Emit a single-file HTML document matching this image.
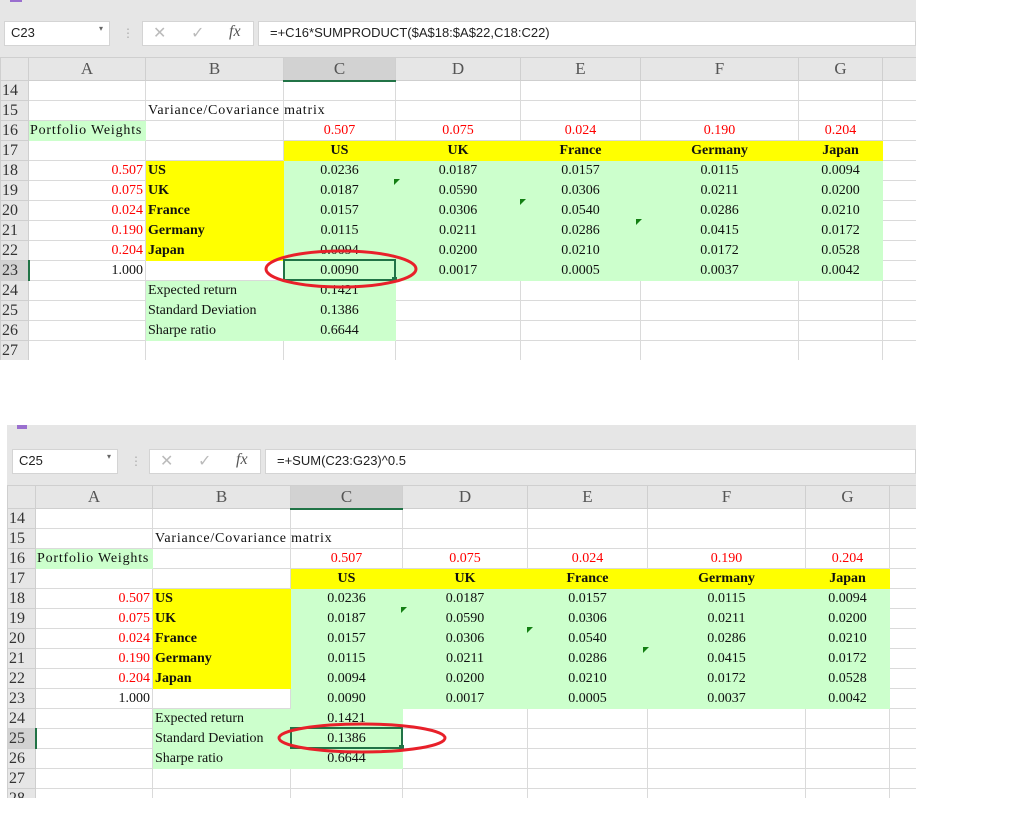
<!DOCTYPE html>
<html><head><meta charset="utf-8">
<style>
*{margin:0;padding:0;box-sizing:border-box}
body{width:1024px;height:828px;background:#fff;position:relative;overflow:hidden;font-family:"Liberation Serif",serif}
.panel{position:absolute;background:#e6e6e6;overflow:hidden}
.nb{position:absolute;background:#fff;border:1px solid #d4d4d4;font-family:"Liberation Sans",sans-serif;font-size:13px;color:#222;padding:3px 6px;height:25px}
.btns{position:absolute;background:#fff;border:1px solid #d4d4d4;height:25px;color:#bbb;font-size:16px}
table{position:absolute;border-collapse:collapse;table-layout:fixed;font-size:14px;color:#111}
td{height:20px;border:1px solid #dadada;background:#fff;white-space:nowrap;overflow:visible;padding:0 2px;line-height:18px}
tr.h td{height:23px;background:#e6e6e6;border-color:#cfcfcf;text-align:center;font-size:17px;color:#555}
tr.h td.sel{background:#d2d2d2;border-bottom:2px solid #217346}
td.rh{background:#e6e6e6;border-color:#cfcfcf;font-size:16px;color:#333;padding-left:1px;text-align:left}
td.rhs{background:#d2d2d2;border-right:2px solid #217346}
.g{background:#ccffcc;border-color:#ccffcc}
.y{background:#ffff00;border-color:#ffff00;font-weight:bold}
.r{color:#ff0000}
.c{text-align:center}
.rt{text-align:right}
.w{letter-spacing:0.8px}
.tri{position:absolute;width:0;height:0;border-top:6px solid #137f13;border-right:6px solid transparent}
</style></head><body>

<!-- TOP PANEL -->
<div class="panel" style="left:0;top:0;width:916px;height:360px">
  <div style="position:absolute;left:10px;top:0;width:12px;height:2px;background:#9a6fcf"></div>
  <div class="nb" style="left:4px;top:21px;width:106px">C23<span style="position:absolute;right:6px;top:2px;font-size:8px;color:#666">▾</span></div>
  <div style="position:absolute;left:122px;top:26px;color:#aaa;font-size:12px">⋮</div>
  <div class="btns" style="left:142px;top:21px;width:112px"><span style="position:absolute;left:10px;top:1px">✕</span><span style="position:absolute;left:48px;top:1px">✓</span><span style="position:absolute;left:86px;top:1px;color:#555;font-style:italic;font-family:'Liberation Serif',serif">fx</span></div>
  <div class="nb" style="left:258px;top:21px;width:658px;padding-left:11px">=+C16*SUMPRODUCT($A$18:$A$22,C18:C22)</div>
  <table style="left:0;top:57px;width:916px">
    <colgroup><col style="width:28px"><col style="width:117px"><col style="width:138px"><col style="width:112px"><col style="width:125px"><col style="width:120px"><col style="width:158px"><col style="width:84px"><col style="width:34px"></colgroup>
    <tr class="h"><td></td><td>A</td><td>B</td><td class="sel">C</td><td>D</td><td>E</td><td>F</td><td>G</td><td></td></tr>
    <tr><td class="rh">14</td><td></td><td></td><td></td><td></td><td></td><td></td><td></td><td></td></tr>
    <tr><td class="rh">15</td><td></td><td class="w">Variance/Covariance matrix</td><td></td><td></td><td></td><td></td><td></td><td></td></tr>
    <tr><td class="rh">16</td><td class="g w" style="padding:0 1px">Portfolio Weights</td><td></td><td class="c r">0.507</td><td class="c r">0.075</td><td class="c r">0.024</td><td class="c r">0.190</td><td class="c r">0.204</td><td></td></tr>
    <tr><td class="rh">17</td><td></td><td></td><td class="y c">US</td><td class="y c">UK</td><td class="y c">France</td><td class="y c">Germany</td><td class="y c">Japan</td><td></td></tr>
    <tr><td class="rh">18</td><td class="rt r">0.507</td><td class="y">US</td><td class="g c">0.0236</td><td class="g c">0.0187</td><td class="g c">0.0157</td><td class="g c">0.0115</td><td class="g c">0.0094</td><td></td></tr>
    <tr><td class="rh">19</td><td class="rt r">0.075</td><td class="y">UK</td><td class="g c">0.0187</td><td class="g c">0.0590</td><td class="g c">0.0306</td><td class="g c">0.0211</td><td class="g c">0.0200</td><td></td></tr>
    <tr><td class="rh">20</td><td class="rt r">0.024</td><td class="y">France</td><td class="g c">0.0157</td><td class="g c">0.0306</td><td class="g c">0.0540</td><td class="g c">0.0286</td><td class="g c">0.0210</td><td></td></tr>
    <tr><td class="rh">21</td><td class="rt r">0.190</td><td class="y">Germany</td><td class="g c">0.0115</td><td class="g c">0.0211</td><td class="g c">0.0286</td><td class="g c">0.0415</td><td class="g c">0.0172</td><td></td></tr>
    <tr><td class="rh">22</td><td class="rt r">0.204</td><td class="y">Japan</td><td class="g c">0.0094</td><td class="g c">0.0200</td><td class="g c">0.0210</td><td class="g c">0.0172</td><td class="g c">0.0528</td><td></td></tr>
    <tr><td class="rh rhs">23</td><td class="rt">1.000</td><td></td><td class="g c">0.0090</td><td class="g c">0.0017</td><td class="g c">0.0005</td><td class="g c">0.0037</td><td class="g c">0.0042</td><td></td></tr>
    <tr><td class="rh">24</td><td></td><td class="g">Expected return</td><td class="g c">0.1421</td><td></td><td></td><td></td><td></td><td></td></tr>
    <tr><td class="rh">25</td><td></td><td class="g">Standard Deviation</td><td class="g c">0.1386</td><td></td><td></td><td></td><td></td><td></td></tr>
    <tr><td class="rh">26</td><td></td><td class="g">Sharpe ratio</td><td class="g c">0.6644</td><td></td><td></td><td></td><td></td><td></td></tr>
    <tr><td class="rh">27</td><td></td><td></td><td></td><td></td><td></td><td></td><td></td><td></td></tr>
  </table>
  <div style="position:absolute;left:283px;top:259px;width:113px;height:22px;border:2px solid #217346"></div>
  <div style="position:absolute;left:392px;top:277px;width:5px;height:5px;background:#217346"></div>
  <div class="tri" style="left:394px;top:179px"></div>
  <div class="tri" style="left:520px;top:199px"></div>
  <div class="tri" style="left:636px;top:219px"></div>
</div>
<svg style="position:absolute;left:0;top:0" width="1024" height="828">
  <ellipse cx="341" cy="269" rx="75" ry="18" fill="none" stroke="#e8202a" stroke-width="3"/>
</svg>

<!-- BOTTOM PANEL -->
<div class="panel" style="left:7px;top:425px;width:909px;height:373px">
  <div style="position:absolute;left:10px;top:0;width:10px;height:4px;background:#9a6fcf"></div>
  <div class="nb" style="left:5px;top:24px;width:106px">C25<span style="position:absolute;right:6px;top:2px;font-size:8px;color:#666">▾</span></div>
  <div style="position:absolute;left:123px;top:29px;color:#aaa;font-size:12px">⋮</div>
  <div class="btns" style="left:142px;top:24px;width:112px"><span style="position:absolute;left:10px;top:1px">✕</span><span style="position:absolute;left:48px;top:1px">✓</span><span style="position:absolute;left:86px;top:1px;color:#555;font-style:italic;font-family:'Liberation Serif',serif">fx</span></div>
  <div class="nb" style="left:258px;top:24px;width:651px;padding-left:11px">=+SUM(C23:G23)^0.5</div>
  <table style="left:0;top:60px;width:909px">
    <colgroup><col style="width:28px"><col style="width:117px"><col style="width:138px"><col style="width:112px"><col style="width:125px"><col style="width:120px"><col style="width:158px"><col style="width:84px"><col style="width:27px"></colgroup>
    <tr class="h"><td></td><td>A</td><td>B</td><td class="sel">C</td><td>D</td><td>E</td><td>F</td><td>G</td><td></td></tr>
    <tr><td class="rh">14</td><td></td><td></td><td></td><td></td><td></td><td></td><td></td><td></td></tr>
    <tr><td class="rh">15</td><td></td><td class="w">Variance/Covariance matrix</td><td></td><td></td><td></td><td></td><td></td><td></td></tr>
    <tr><td class="rh">16</td><td class="g w" style="padding:0 1px">Portfolio Weights</td><td></td><td class="c r">0.507</td><td class="c r">0.075</td><td class="c r">0.024</td><td class="c r">0.190</td><td class="c r">0.204</td><td></td></tr>
    <tr><td class="rh">17</td><td></td><td></td><td class="y c">US</td><td class="y c">UK</td><td class="y c">France</td><td class="y c">Germany</td><td class="y c">Japan</td><td></td></tr>
    <tr><td class="rh">18</td><td class="rt r">0.507</td><td class="y">US</td><td class="g c">0.0236</td><td class="g c">0.0187</td><td class="g c">0.0157</td><td class="g c">0.0115</td><td class="g c">0.0094</td><td></td></tr>
    <tr><td class="rh">19</td><td class="rt r">0.075</td><td class="y">UK</td><td class="g c">0.0187</td><td class="g c">0.0590</td><td class="g c">0.0306</td><td class="g c">0.0211</td><td class="g c">0.0200</td><td></td></tr>
    <tr><td class="rh">20</td><td class="rt r">0.024</td><td class="y">France</td><td class="g c">0.0157</td><td class="g c">0.0306</td><td class="g c">0.0540</td><td class="g c">0.0286</td><td class="g c">0.0210</td><td></td></tr>
    <tr><td class="rh">21</td><td class="rt r">0.190</td><td class="y">Germany</td><td class="g c">0.0115</td><td class="g c">0.0211</td><td class="g c">0.0286</td><td class="g c">0.0415</td><td class="g c">0.0172</td><td></td></tr>
    <tr><td class="rh">22</td><td class="rt r">0.204</td><td class="y">Japan</td><td class="g c">0.0094</td><td class="g c">0.0200</td><td class="g c">0.0210</td><td class="g c">0.0172</td><td class="g c">0.0528</td><td></td></tr>
    <tr><td class="rh">23</td><td class="rt">1.000</td><td></td><td class="g c">0.0090</td><td class="g c">0.0017</td><td class="g c">0.0005</td><td class="g c">0.0037</td><td class="g c">0.0042</td><td></td></tr>
    <tr><td class="rh">24</td><td></td><td class="g">Expected return</td><td class="g c">0.1421</td><td></td><td></td><td></td><td></td><td></td></tr>
    <tr><td class="rh rhs">25</td><td></td><td class="g">Standard Deviation</td><td class="g c">0.1386</td><td></td><td></td><td></td><td></td><td></td></tr>
    <tr><td class="rh">26</td><td></td><td class="g">Sharpe ratio</td><td class="g c">0.6644</td><td></td><td></td><td></td><td></td><td></td></tr>
    <tr><td class="rh">27</td><td></td><td></td><td></td><td></td><td></td><td></td><td></td><td></td></tr>
    <tr><td class="rh">28</td><td></td><td></td><td></td><td></td><td></td><td></td><td></td><td></td></tr>
  </table>
  <div style="position:absolute;left:283px;top:302px;width:113px;height:22px;border:2px solid #217346"></div>
  <div style="position:absolute;left:392px;top:320px;width:5px;height:5px;background:#217346"></div>
  <div class="tri" style="left:394px;top:182px"></div>
  <div class="tri" style="left:520px;top:202px"></div>
  <div class="tri" style="left:636px;top:222px"></div>
</div>
<svg style="position:absolute;left:0;top:0" width="1024" height="828">
  <ellipse cx="362" cy="738" rx="83" ry="14" fill="none" stroke="#e8202a" stroke-width="3"/>
</svg>
</body></html>
